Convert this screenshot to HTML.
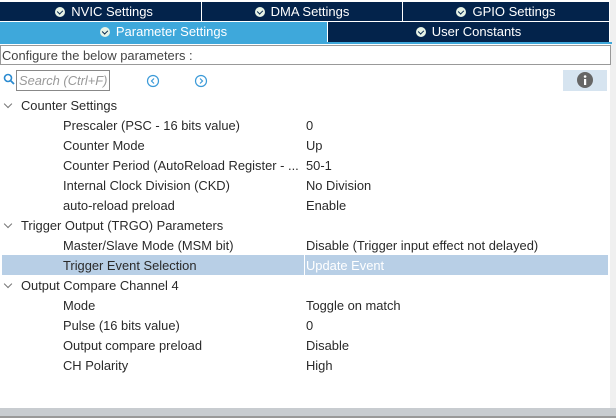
<!DOCTYPE html>
<html><head><style>
*{margin:0;padding:0;box-sizing:border-box}
body{width:616px;height:418px;background:#fff;font-family:"Liberation Sans",sans-serif;font-size:12.9px;color:#2a2a2a;position:relative;overflow:hidden}
.a{position:absolute}
.tab{position:absolute;color:#fff;font-size:13px;text-align:center;line-height:20px;background:#03234b}
.ck{display:inline-block;width:10px;height:10px;border-radius:50%;background:#e6f2e6;vertical-align:-1px;margin-right:6px;position:relative}
.ck:after{content:"";position:absolute;left:3px;top:2px;width:3px;height:4px;border:solid #03234b;border-width:0 1.5px 1.5px 0;transform:rotate(45deg)}
.row{position:absolute;left:0;width:608px;height:20px;line-height:21px}
.row .l{position:absolute;left:63px}
.row .v{position:absolute;left:306px}
.grp .l{left:21px}
.grp .c{position:absolute;left:5px;top:6px;width:6px;height:6px;border:solid #777;border-width:0 1px 1px 0;transform:rotate(45deg)}
</style></head><body>
<div class="a" style="left:610px;top:0;width:6px;height:418px;background:#f0f0f0"></div>
<div class="tab" style="left:0;top:2px;width:201px;height:19px">&nbsp;&nbsp;<span class="ck"></span>NVIC Settings</div>
<div class="tab" style="left:202px;top:2px;width:200px;height:19px"><span class="ck"></span>DMA Settings</div>
<div class="tab" style="left:403px;top:2px;width:206px;height:19px"><span class="ck"></span>GPIO Settings</div>
<div class="tab" style="left:0;top:22px;width:327px;height:20px;background:#3ea8db;line-height:20px"><span class="ck" style="background:#e6f2e6"></span>Parameter Settings</div>
<div class="tab" style="left:328px;top:22px;width:281px;height:20px;line-height:20px"><span class="ck"></span>User Constants</div>
<div class="a" style="left:0;top:42px;width:612px;height:2px;background:#3ea8db"></div>
<div class="a" style="left:0;top:45px;width:611px;height:20px;border:1px solid #999;line-height:19px;color:#444;padding-left:1px">Configure the below parameters :</div>
<svg class="a" style="left:3px;top:73px" width="12" height="12"><circle cx="5" cy="5" r="3.5" fill="none" stroke="#2a8ad0" stroke-width="1.6"/><line x1="7.5" y1="7.5" x2="11" y2="11" stroke="#2a8ad0" stroke-width="1.8"/></svg>
<div class="a" style="left:16px;top:70px;width:94px;height:21px;border:1px solid #888;color:#999;font-style:italic;line-height:19px;padding-left:2px;font-size:12.9px">Search (Ctrl+F)</div>
<svg class="a" style="left:146px;top:74px" width="14" height="14"><circle cx="7" cy="7" r="5.5" fill="none" stroke="#3b9ad8" stroke-width="1.2"/><path d="M8 4.5L5.5 7L8 9.5" fill="none" stroke="#3b9ad8" stroke-width="1.2"/></svg>
<svg class="a" style="left:194px;top:74px" width="14" height="14"><circle cx="7" cy="7" r="5.5" fill="none" stroke="#3b9ad8" stroke-width="1.2"/><path d="M6 4.5L8.5 7L6 9.5" fill="none" stroke="#3b9ad8" stroke-width="1.2"/></svg>
<div class="a" style="left:563px;top:70px;width:44px;height:21px;background:#d6e4f0"></div>
<svg class="a" style="left:577px;top:72px" width="16" height="16"><circle cx="8" cy="8" r="8" fill="#666"/><rect x="7" y="7" width="2.2" height="6" fill="#fff"/><circle cx="8.1" cy="4.5" r="1.3" fill="#fff"/></svg>

<div class="row grp" style="top:95px"><span class="c"></span><span class="l">Counter Settings</span></div>
<div class="row" style="top:115px"><span class="l">Prescaler (PSC - 16 bits value)</span><span class="v">0</span></div>
<div class="row" style="top:135px"><span class="l">Counter Mode</span><span class="v">Up</span></div>
<div class="row" style="top:155px"><span class="l">Counter Period (AutoReload Register - ...</span><span class="v">50-1</span></div>
<div class="row" style="top:175px"><span class="l">Internal Clock Division (CKD)</span><span class="v">No Division</span></div>
<div class="row" style="top:195px"><span class="l">auto-reload preload</span><span class="v">Enable</span></div>
<div class="row grp" style="top:215px"><span class="c"></span><span class="l">Trigger Output (TRGO) Parameters</span></div>
<div class="row" style="top:235px"><span class="l">Master/Slave Mode (MSM bit)</span><span class="v">Disable (Trigger input effect not delayed)</span></div>
<div class="row" style="top:255px;left:2px;width:606px;background:#b8cfe6"><span class="l" style="left:61px">Trigger Event Selection</span><span class="a" style="left:302px;top:0;width:1px;height:20px;background:#fff"></span><span class="v" style="left:304px;color:#fff">Update Event</span></div>
<div class="row grp" style="top:275px"><span class="c"></span><span class="l">Output Compare Channel 4</span></div>
<div class="row" style="top:295px"><span class="l">Mode</span><span class="v">Toggle on match</span></div>
<div class="row" style="top:315px"><span class="l">Pulse (16 bits value)</span><span class="v">0</span></div>
<div class="row" style="top:335px"><span class="l">Output compare preload</span><span class="v">Disable</span></div>
<div class="row" style="top:355px"><span class="l">CH Polarity</span><span class="v">High</span></div>
<div class="a" style="left:0;top:408px;width:616px;height:10px;background:#c8ccd0;border-bottom:2px solid #999"></div>
</body></html>
